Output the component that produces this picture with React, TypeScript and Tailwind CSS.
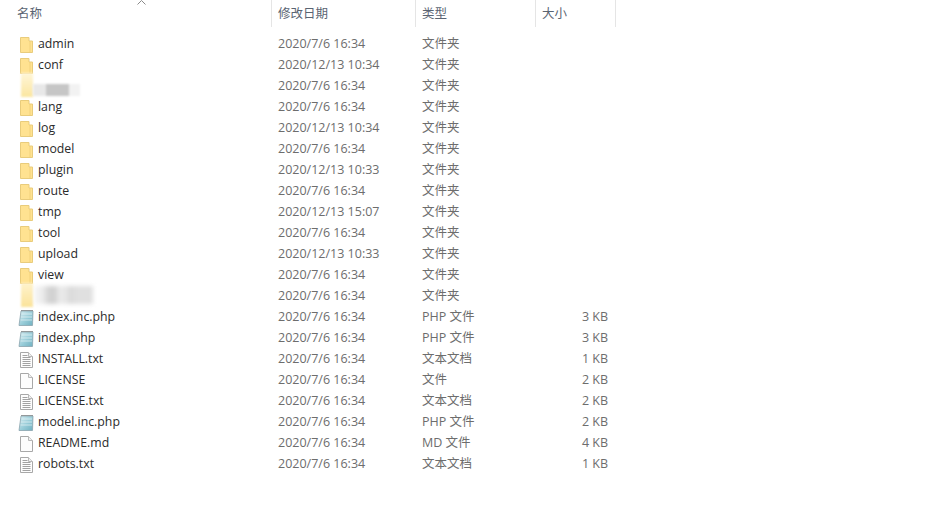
const FONT = "font-['Open_Sans','Noto_Sans_CJK_SC',sans-serif]";

type Kind = 'folder' | 'folderBlur1' | 'folderBlur2' | 'php' | 'txt' | 'blank';
type Row = { name: string; date: string; type: string; size?: string; kind: Kind };

const rows: Row[] = [
  { name: 'admin', date: '2020/7/6 16:34', type: '文件夹', kind: 'folder' },
  { name: 'conf', date: '2020/12/13 10:34', type: '文件夹', kind: 'folder' },
  { name: '', date: '2020/7/6 16:34', type: '文件夹', kind: 'folderBlur1' },
  { name: 'lang', date: '2020/7/6 16:34', type: '文件夹', kind: 'folder' },
  { name: 'log', date: '2020/12/13 10:34', type: '文件夹', kind: 'folder' },
  { name: 'model', date: '2020/7/6 16:34', type: '文件夹', kind: 'folder' },
  { name: 'plugin', date: '2020/12/13 10:33', type: '文件夹', kind: 'folder' },
  { name: 'route', date: '2020/7/6 16:34', type: '文件夹', kind: 'folder' },
  { name: 'tmp', date: '2020/12/13 15:07', type: '文件夹', kind: 'folder' },
  { name: 'tool', date: '2020/7/6 16:34', type: '文件夹', kind: 'folder' },
  { name: 'upload', date: '2020/12/13 10:33', type: '文件夹', kind: 'folder' },
  { name: 'view', date: '2020/7/6 16:34', type: '文件夹', kind: 'folder' },
  { name: '', date: '2020/7/6 16:34', type: '文件夹', kind: 'folderBlur2' },
  { name: 'index.inc.php', date: '2020/7/6 16:34', type: 'PHP 文件', size: '3 KB', kind: 'php' },
  { name: 'index.php', date: '2020/7/6 16:34', type: 'PHP 文件', size: '3 KB', kind: 'php' },
  { name: 'INSTALL.txt', date: '2020/7/6 16:34', type: '文本文档', size: '1 KB', kind: 'txt' },
  { name: 'LICENSE', date: '2020/7/6 16:34', type: '文件', size: '2 KB', kind: 'blank' },
  { name: 'LICENSE.txt', date: '2020/7/6 16:34', type: '文本文档', size: '2 KB', kind: 'txt' },
  { name: 'model.inc.php', date: '2020/7/6 16:34', type: 'PHP 文件', size: '2 KB', kind: 'php' },
  { name: 'README.md', date: '2020/7/6 16:34', type: 'MD 文件', size: '4 KB', kind: 'blank' },
  { name: 'robots.txt', date: '2020/7/6 16:34', type: '文本文档', size: '1 KB', kind: 'txt' },
];

function Folder() {
  return (
    <svg width="16" height="18" viewBox="0 0 16 18">
      <path d="M2.5 1.5 H11 V5 H14.5 V16.5 H2.5 Z" fill="#ffe291" stroke="#e9cc7c" strokeWidth="1" />
      <path d="M12 5 V16" stroke="#f2d27a" strokeWidth="1" />
    </svg>
  );
}

function Doc({ lines }: { lines?: boolean }) {
  return (
    <svg width="16" height="18" viewBox="0 0 16 18">
      <path d="M2.5 1.5 H10.5 L14.5 5.5 V16.5 H2.5 Z" fill="#fdfdfd" stroke="#a8a8a8" strokeWidth="1" />
      <path d="M10.5 1.5 V5.5 H14.5" fill="#f0f0f0" stroke="#b8b8b8" strokeWidth="1" />
      {lines && <path d="M4.5 4.5 H9.5 M4.5 6.5 H12.5 M4.5 8.5 H12.5 M4.5 10.5 H12.5 M4.5 12.5 H12.5 M4.5 14.5 H12.5" stroke="#a2a2a2" strokeWidth="1" />}
    </svg>
  );
}

function Php() {
  return (
    <svg width="16" height="18" viewBox="0 0 16 18">
      <defs>
        <linearGradient id="phpFill" x1="0" y1="0" x2="1" y2="1">
          <stop offset="0" stopColor="#d8eef2" />
          <stop offset="0.55" stopColor="#98ccd8" />
          <stop offset="1" stopColor="#6fb0c0" />
        </linearGradient>
      </defs>
      <path d="M3 2 H15 L14.5 16.5 H1 Z" fill="url(#phpFill)" stroke="#8aa3ad" strokeWidth="0.8" />
      <path d="M3.5 5 H14 M3 8 H14 M2.5 11 H14" stroke="#e6f4f6" strokeWidth="0.7" />
      <path d="M3.5 1.5 H15" stroke="#555" strokeWidth="1.2" strokeDasharray="1 1" />
    </svg>
  );
}

function Icon({ kind }: { kind: Kind }) {
  if (kind === 'php') return <Php />;
  if (kind === 'txt') return <Doc lines />;
  if (kind === 'blank') return <Doc />;
  return <Folder />;
}

function BlurredName({ kind }: { kind: Kind }) {
  if (kind === 'folderBlur1') {
    return (
      <div className="flex items-center ml-[3px]">
        <div className="w-[12px] h-[24px] -translate-y-[2px] bg-gradient-to-b from-[#fff6d8] to-[#fbe6a0] blur-[1px]" />
        <div className="flex h-[12px] translate-y-[3px] blur-[1px]">
          <div className="w-[13px] bg-[#e8e8e8]" />
          <div className="w-[23px] bg-[#c6c6c6]" />
          <div className="w-[11px] bg-[#f2f2f2]" />
        </div>
      </div>
    );
  }
  return (
    <div className="flex items-center ml-[3px]">
      <div className="w-[12px] h-[24px] -translate-y-[2px] bg-gradient-to-b from-[#fff3cc] to-[#fbe39a] blur-[1px]" />
      <div className="flex h-[18px] -translate-y-[2px] ml-[2px] blur-[2px]">
        <div className="w-[8px] bg-[#f0f0f0]" />
        <div className="w-[4px] bg-[#e2e2e2]" />
        <div className="w-[10px] bg-[#d2d2d2]" />
        <div className="w-[10px] bg-[#e8e8e8]" />
        <div className="w-[8px] bg-[#dcdcdc]" />
        <div className="w-[18px] bg-[#e0e0e0]" />
      </div>
    </div>
  );
}

export default function App() {
  return (
    <div className={`${FONT} w-[949px] h-[505px] bg-white text-[12.5px] overflow-hidden`}>
      <div className="relative flex h-[27px] text-[#5a6472] leading-[28px]">
        <div className="w-[272px] pl-[17px] border-r border-[#e5e5e5]">名称</div>
        <div className="w-[144px] pl-[6px] border-r border-[#e5e5e5]">修改日期</div>
        <div className="w-[120px] pl-[6px] border-r border-[#e5e5e5]">类型</div>
        <div className="w-[80px] pl-[6px] border-r border-[#e5e5e5]">大小</div>
        <svg className="absolute left-[137px] top-0" width="9" height="5" viewBox="0 0 9 5">
          <path d="M0.5 4.5 L4.5 0.5 L8.5 4.5" fill="none" stroke="#8a8a8a" strokeWidth="1" />
        </svg>
      </div>
      <div className="mt-[7px]">
        {rows.map((r, i) => (
          <div key={i} className="flex items-center h-[21px] text-[#6d6d6d]">
            <div className="w-[272px] flex items-center pl-[18px]">
              {r.name ? (
                <>
                  <div className="w-[20px] flex items-center">
                    <Icon kind={r.kind} />
                  </div>
                  <span className="text-[#2b2b2b] text-[12.3px]">{r.name}</span>
                </>
              ) : (
                <BlurredName kind={r.kind} />
              )}
            </div>
            <div className="w-[144px] pl-[6px]">{r.date}</div>
            <div className="w-[120px] pl-[6px]">{r.type}</div>
            <div className="w-[72px] text-right">{r.size}</div>
          </div>
        ))}
      </div>
    </div>
  );
}
